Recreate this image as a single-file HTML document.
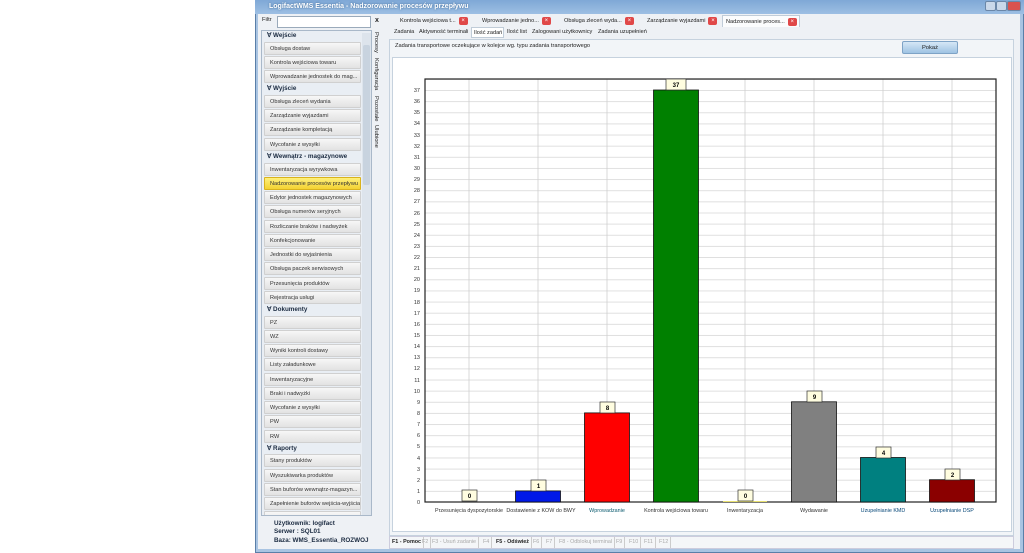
<!DOCTYPE html>
<html><head><meta charset="utf-8">
<style>
*{margin:0;padding:0;box-sizing:border-box}
body{width:1024px;height:553px;background:#fff;position:relative;overflow:hidden;font-family:"Liberation Sans",sans-serif;font-size:6px;color:#222}
.a{position:absolute}
#win{left:255px;top:0;width:769px;height:553px;background:#a9c4e2;border:1px solid #5a7fa8}
#title{left:255px;top:0;width:769px;height:14px;background:linear-gradient(#7fa8d6,#9dbfe3);}
#title span{position:absolute;left:14px;top:3px;color:#fff;font-weight:bold;font-size:7px;text-shadow:0 0 2px #35608f}
.wb{top:1px;height:10px;border:1px solid #6b87a8;border-radius:2px}
#main{left:258px;top:14px;width:762px;height:535px;background:#eef1f5}
#side{left:261px;top:30px;width:111px;height:486px;background:#e9eef4;border:1px solid #a9b8c9;overflow:hidden}
.h{height:10.6px;line-height:10.6px;font-weight:bold;font-size:6.3px;padding-left:5px;color:#1a2a40}
.i{height:13px;margin:0 10px 1.25px 2px;line-height:13px;padding-left:5px;background:linear-gradient(#f7f7f7,#e2e2e2);border:1px solid #d0d0d0;border-radius:1px;font-size:5.6px;color:#333;white-space:nowrap;overflow:hidden}
.sel{background:linear-gradient(#fff07a,#f4d232);border-color:#d9b21e}
.vt{writing-mode:vertical-rl;font-size:5.8px;position:absolute;left:373px;color:#222}
.tab{top:15px;height:12px;line-height:12px;font-size:5.6px;padding-left:3px}
.x{display:inline-block;width:9px;height:8px;background:#e04848;border-radius:2px;vertical-align:middle;margin-left:3px;color:#fff;font-size:6px;line-height:8px;text-align:center}
.st{top:27px;height:11px;line-height:11px;font-size:5.6px}
.fk{top:537px;height:11px;line-height:11px;font-size:5.4px;color:#aaa;border-right:1px solid #ccc;padding:0 2px}
</style></head><body>
<div id="win" class="a"></div>
<div id="title" class="a"><span>LogifactWMS Essentia - Nadzorowanie procesów przepływu</span>
<div class="a wb" style="left:730px;width:11px;background:#c9d8ea"></div>
<div class="a wb" style="left:741px;width:11px;background:#c9d8ea"></div>
<div class="a wb" style="left:752px;width:14px;background:#d9534f"></div></div>
<div id="main" class="a"></div>
<div class="a" style="left:262px;top:17px;font-size:5.8px">Filtr</div>
<div class="a" style="left:277px;top:16px;width:94px;height:12px;background:#fff;border:1px solid #9aaabb"></div>
<div class="a" style="left:375px;top:17px;font-size:7px;font-weight:bold">x</div>
<div id="side" class="a">
<div class="h">∀ Wejście</div>
<div class="i">Obsługa dostaw</div><div class="i">Kontrola wejściowa towaru</div><div class="i">Wprowadzanie jednostek do mag...</div>
<div class="h">∀ Wyjście</div>
<div class="i">Obsługa zleceń wydania</div><div class="i">Zarządzanie wyjazdami</div><div class="i">Zarządzanie kompletacją</div><div class="i">Wycofanie z wysyłki</div>
<div class="h">∀ Wewnątrz - magazynowe</div>
<div class="i">Inwentaryzacja wyrywkowa</div><div class="i sel">Nadzorowanie procesów przepływu</div><div class="i">Edytor jednostek magazynowych</div><div class="i">Obsługa numerów seryjnych</div><div class="i">Rozliczanie braków i nadwyżek</div><div class="i">Konfekcjonowanie</div><div class="i">Jednostki do wyjaśnienia</div><div class="i">Obsługa paczek serwisowych</div><div class="i">Przesunięcia produktów</div><div class="i">Rejestracja usługi</div>
<div class="h">∀ Dokumenty</div>
<div class="i">PZ</div><div class="i">WZ</div><div class="i">Wyniki kontroli dostawy</div><div class="i">Listy załadunkowe</div><div class="i">Inwentaryzacyjne</div><div class="i">Braki i nadwyżki</div><div class="i">Wycofanie z wysyłki</div><div class="i">PW</div><div class="i">RW</div>
<div class="h">∀ Raporty</div>
<div class="i">Stany produktów</div><div class="i">Wyszukiwarka produktów</div><div class="i">Stan buforów wewnątrz-magazyn...</div><div class="i">Zapełnienie buforów wejścia-wyjścia</div><div class="i">Zestawienia</div>
<div class="a" style="left:100px;top:2px;width:9px;height:482px;background:#dde4ec"><div class="a" style="left:1px;top:12px;width:7px;height:140px;background:#c8d3df;border-radius:2px"></div></div>
</div>
<div class="vt" style="top:32px">Procesy</div>
<div class="vt" style="top:58px">Konfiguracja</div>
<div class="vt" style="top:96px">Pozostałe</div>
<div class="vt" style="top:125px">Ulubione</div>
<div class="a" style="left:274px;top:520px;font-size:6.3px;font-weight:bold;line-height:8.3px;color:#1a2a40">Użytkownik: logifact<br>Serwer : SQL01<br>Baza: WMS_Essentia_ROZWOJ</div>
<div class="a tab" style="left:397px">Kontrola wejściowa t...<span class="x">×</span></div>
<div class="a tab" style="left:479px">Wprowadzanie jedno...<span class="x">×</span></div>
<div class="a tab" style="left:561px">Obsługa zleceń wyda...<span class="x">×</span></div>
<div class="a tab" style="left:644px">Zarządzanie wyjazdami<span class="x">×</span></div>
<div class="a tab" style="left:722px;background:#fbfcfd;border:1px solid #c0ccd8;border-bottom:none;padding-right:2px">Nadzorowanie proces...<span class="x">×</span></div>
<div class="a st" style="left:394px">Zadania</div>
<div class="a st" style="left:419px">Aktywność terminali</div>
<div class="a st" style="left:471px;width:33px;background:#fff;border:1px solid #c0ccd8;padding-left:2px;white-space:nowrap;overflow:hidden">Ilość zadań</div>
<div class="a st" style="left:507px">Ilość list</div>
<div class="a st" style="left:532px">Zalogowani użytkownicy</div>
<div class="a st" style="left:598px">Zadania uzupełnień</div>
<div class="a" style="left:389px;top:39px;width:625px;height:497px;border:1px solid #c6d2de;background:#f2f5f8"></div>
<div class="a" style="left:395px;top:43px;font-size:5.7px">Zadania transportowe oczekujące w kolejce wg. typu zadania transportowego</div>
<div class="a" style="left:902px;top:41px;width:56px;height:13px;background:linear-gradient(#d6e7f6,#9fc3e3);border:1px solid #7ea3c6;border-radius:2px;text-align:center;line-height:12px;font-size:5.8px">Pokaż</div>
<div class="a" style="left:392px;top:57px;width:620px;height:475px;background:#fff;border:1px solid #c6d2de"></div>
<svg class="a" style="left:0;top:0" width="1024" height="553" font-family="Liberation Sans, sans-serif">
<defs><pattern id="hg" x="0" y="90" width="10" height="11.135" patternUnits="userSpaceOnUse"><line x1="0" y1="0.5" x2="10" y2="0.5" stroke="#d8d8d8" stroke-width="0.8"/></pattern></defs>
<rect x="425" y="79" width="571" height="423" fill="url(#hg)"/>
<g stroke="#cfcfcf" stroke-width="0.8">
<line x1="469" y1="79" x2="469" y2="502"/><line x1="538" y1="79" x2="538" y2="502"/><line x1="607" y1="79" x2="607" y2="502"/><line x1="676" y1="79" x2="676" y2="502"/><line x1="745" y1="79" x2="745" y2="502"/><line x1="814" y1="79" x2="814" y2="502"/><line x1="883" y1="79" x2="883" y2="502"/><line x1="952" y1="79" x2="952" y2="502"/></g>
<rect x="425" y="79" width="571" height="423" fill="none" stroke="#222" stroke-width="1.2"/>
<g font-size="5.5" text-anchor="end" fill="#333">
<text x="420" y="504">0</text><text x="420" y="493">1</text><text x="420" y="482">2</text><text x="420" y="471">3</text><text x="420" y="460">4</text><text x="420" y="448">5</text><text x="420" y="437">6</text><text x="420" y="426">7</text><text x="420" y="415">8</text><text x="420" y="404">9</text><text x="420" y="393">10</text><text x="420" y="382">11</text><text x="420" y="370">12</text><text x="420" y="359">13</text><text x="420" y="348">14</text><text x="420" y="337">15</text><text x="420" y="326">16</text><text x="420" y="315">17</text><text x="420" y="304">18</text><text x="420" y="292">19</text><text x="420" y="281">20</text><text x="420" y="270">21</text><text x="420" y="259">22</text><text x="420" y="248">23</text><text x="420" y="237">24</text><text x="420" y="226">25</text><text x="420" y="215">26</text><text x="420" y="203">27</text><text x="420" y="192">28</text><text x="420" y="181">29</text><text x="420" y="170">30</text><text x="420" y="159">31</text><text x="420" y="148">32</text><text x="420" y="137">33</text><text x="420" y="125">34</text><text x="420" y="114">35</text><text x="420" y="103">36</text><text x="420" y="92">37</text></g>
<g stroke="#111" stroke-width="0.8">
<rect x="515.5" y="490.9" width="45" height="11.1" fill="#0018e8"/>
<rect x="584.5" y="412.9" width="45" height="89.1" fill="#ff0000"/>
<rect x="653.5" y="90" width="45" height="412" fill="#008000"/>
<rect x="791.5" y="401.8" width="45" height="100.2" fill="#808080"/>
<rect x="860.5" y="457.5" width="45" height="44.5" fill="#008080"/>
<rect x="929.5" y="479.7" width="45" height="22.3" fill="#8b0000"/>
</g>
<line x1="723" y1="501.5" x2="767" y2="501.5" stroke="#e8e070" stroke-width="1"/>
<g font-size="6" font-weight="bold" text-anchor="middle">
<rect x="462" y="490" width="15" height="11" fill="#fffde0" stroke="#333" stroke-width="0.7"/><text x="469.5" y="498">0</text>
<rect x="531" y="480" width="15" height="11" fill="#fffde0" stroke="#333" stroke-width="0.7"/><text x="538.5" y="488">1</text>
<rect x="600" y="402" width="15" height="11" fill="#fffde0" stroke="#333" stroke-width="0.7"/><text x="607.5" y="410">8</text>
<rect x="666" y="79" width="20" height="11" fill="#fffde0" stroke="#333" stroke-width="0.7"/><text x="676" y="87">37</text>
<rect x="738" y="490" width="15" height="11" fill="#fffde0" stroke="#333" stroke-width="0.7"/><text x="745.5" y="498">0</text>
<rect x="807" y="391" width="15" height="11" fill="#fffde0" stroke="#333" stroke-width="0.7"/><text x="814.5" y="399">9</text>
<rect x="876" y="447" width="15" height="11" fill="#fffde0" stroke="#333" stroke-width="0.7"/><text x="883.5" y="455">4</text>
<rect x="945" y="469" width="15" height="11" fill="#fffde0" stroke="#333" stroke-width="0.7"/><text x="952.5" y="477">2</text>
</g>
<g font-size="5.4" text-anchor="middle" fill="#333">
<text x="469" y="512">Przesunięcia dyspozytorskie</text><text x="541" y="512">Dostawienie z KOW do BWY</text>
<text x="607" y="512" fill="#0a5a6e">Wprowadzanie</text><text x="676" y="512">Kontrola wejściowa towaru</text>
<text x="745" y="512">Inwentaryzacja</text><text x="814" y="512">Wydawanie</text>
<text x="883" y="512" fill="#0a4a7a">Uzupełnianie KMD</text><text x="952" y="512" fill="#0a4a7a">Uzupełnianie DSP</text></g>
</svg>
<div class="a" style="left:389px;top:536px;width:625px;height:13px;background:#f4f6f8;border:1px solid #ccd"></div>
<div class="a fk" style="left:390px;color:#222;font-weight:bold">F1 - Pomoc</div>
<div class="a fk" style="left:420px">F2</div>
<div class="a fk" style="left:430px">F3 - Usuń zadanie</div>
<div class="a fk" style="left:481px">F4</div>
<div class="a fk" style="left:494px;color:#222;font-weight:bold">F5 - Odśwież</div>
<div class="a fk" style="left:531px">F6</div>
<div class="a fk" style="left:544px">F7</div>
<div class="a fk" style="left:557px">F8 - Odblokuj terminal</div>
<div class="a fk" style="left:614px">F9</div>
<div class="a fk" style="left:627px">F10</div>
<div class="a fk" style="left:642px">F11</div>
<div class="a fk" style="left:657px">F12</div>
</body></html>
